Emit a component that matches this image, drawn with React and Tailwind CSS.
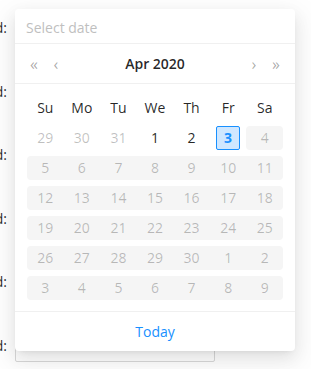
import React from "react";

const FONT = { fontFamily: '"Open Sans", "Noto Sans", sans-serif' };

const labels = ["Date field", "Start field", "End field", "Time field", "Week field", "Month field"];

const weekDays = ["Su", "Mo", "Tu", "We", "Th", "Fr", "Sa"];

// [day, type] type: out = other month, in = enabled, sel = selected/today, dis = disabled
const weeks = [
  [[29, "out"], [30, "out"], [31, "out"], [1, "in"], [2, "in"], [3, "sel"], [4, "dis"]],
  [[5, "dis"], [6, "dis"], [7, "dis"], [8, "dis"], [9, "dis"], [10, "dis"], [11, "dis"]],
  [[12, "dis"], [13, "dis"], [14, "dis"], [15, "dis"], [16, "dis"], [17, "dis"], [18, "dis"]],
  [[19, "dis"], [20, "dis"], [21, "dis"], [22, "dis"], [23, "dis"], [24, "dis"], [25, "dis"]],
  [[26, "dis"], [27, "dis"], [28, "dis"], [29, "dis"], [30, "dis"], [1, "dis"], [2, "dis"]],
  [[3, "dis"], [4, "dis"], [5, "dis"], [6, "dis"], [7, "dis"], [8, "dis"], [9, "dis"]],
];

const Cell = ({ day, type, first, last }) => {
  if (type === "dis") {
    return (
      <div
        className={`h-6 flex items-center justify-center bg-[#f5f5f5] text-[#00000040] ${
          first ? "rounded-l-[4px]" : ""
        } ${last ? "rounded-r-[4px]" : ""}`}
      >
        {day}
      </div>
    );
  }
  if (type === "sel") {
    return (
      <div className="h-6 flex items-center justify-center">
        <div className="w-6 h-6 flex items-center justify-center border border-[#1890ff] bg-[#cfe7ff] rounded-[2px] text-[#1890ff] font-bold">
          {day}
        </div>
      </div>
    );
  }
  return (
    <div
      className={`h-6 flex items-center justify-center ${
        type === "out" ? "text-[#00000040]" : "text-[#000000d9]"
      }`}
    >
      {day}
    </div>
  );
};

const App = () => {
  return (
    <div className="relative w-[311px] h-[369px] overflow-hidden bg-white text-sm" style={FONT}>
      {/* form behind the popup */}
      <div className="flex flex-col gap-[31.6px] pt-3">
        {labels.map((label) => (
          <div key={label} className="flex items-center h-8">
            <div className="w-[15px] shrink-0 overflow-hidden flex justify-end pr-2 text-[#000000d9] whitespace-nowrap">
              {label}:
            </div>
            <div className="w-[200px] h-8 border border-[#d9d9d9] rounded-[2px] bg-white"></div>
          </div>
        ))}
      </div>

      {/* date picker dropdown */}
      <div className="absolute left-[15px] top-[9px] w-[280px] bg-white rounded-[4px] shadow-[0_3px_6px_-4px_rgba(0,0,0,0.12),0_6px_16px_0_rgba(0,0,0,0.08),0_9px_28px_8px_rgba(0,0,0,0.05)]">
        <div className="h-[35px] px-[11px] pt-[3px] flex items-center border-b border-[#f0f0f0] text-[#bfbfbf]">
          Select date
        </div>

        <div className="h-10 px-2 flex items-center border-b border-[#f0f0f0] text-[#00000059]">
          <span className="w-[22px] text-center text-base">«</span>
          <span className="w-[22px] text-center text-base">‹</span>
          <div className="flex-1 text-center font-semibold text-[#000000d9]">Apr 2020</div>
          <span className="w-[22px] text-center text-base">›</span>
          <span className="w-[22px] text-center text-base">»</span>
        </div>

        <div className="px-3 pt-[9px] pb-2">
          <div className="grid grid-cols-7 h-[30px] items-center text-center text-[#000000d9]">
            {weekDays.map((d) => (
              <div key={d}>{d}</div>
            ))}
          </div>
          {weeks.map((week, wi) => (
            <div key={wi} className="grid grid-cols-7 h-[30px] items-center text-center">
              {week.map(([day, type], i) => (
                <Cell
                  key={i}
                  day={day}
                  type={type}
                  first={type === "dis" && (i === 0 || week[i - 1][1] !== "dis")}
                  last={type === "dis" && (i === 6 || week[i + 1][1] !== "dis")}
                />
              ))}
            </div>
          ))}
        </div>

        <div className="h-10 border-t border-[#f0f0f0] flex items-center justify-center text-[#1890ff]">
          Today
        </div>
      </div>
    </div>
  );
};

export default App;
